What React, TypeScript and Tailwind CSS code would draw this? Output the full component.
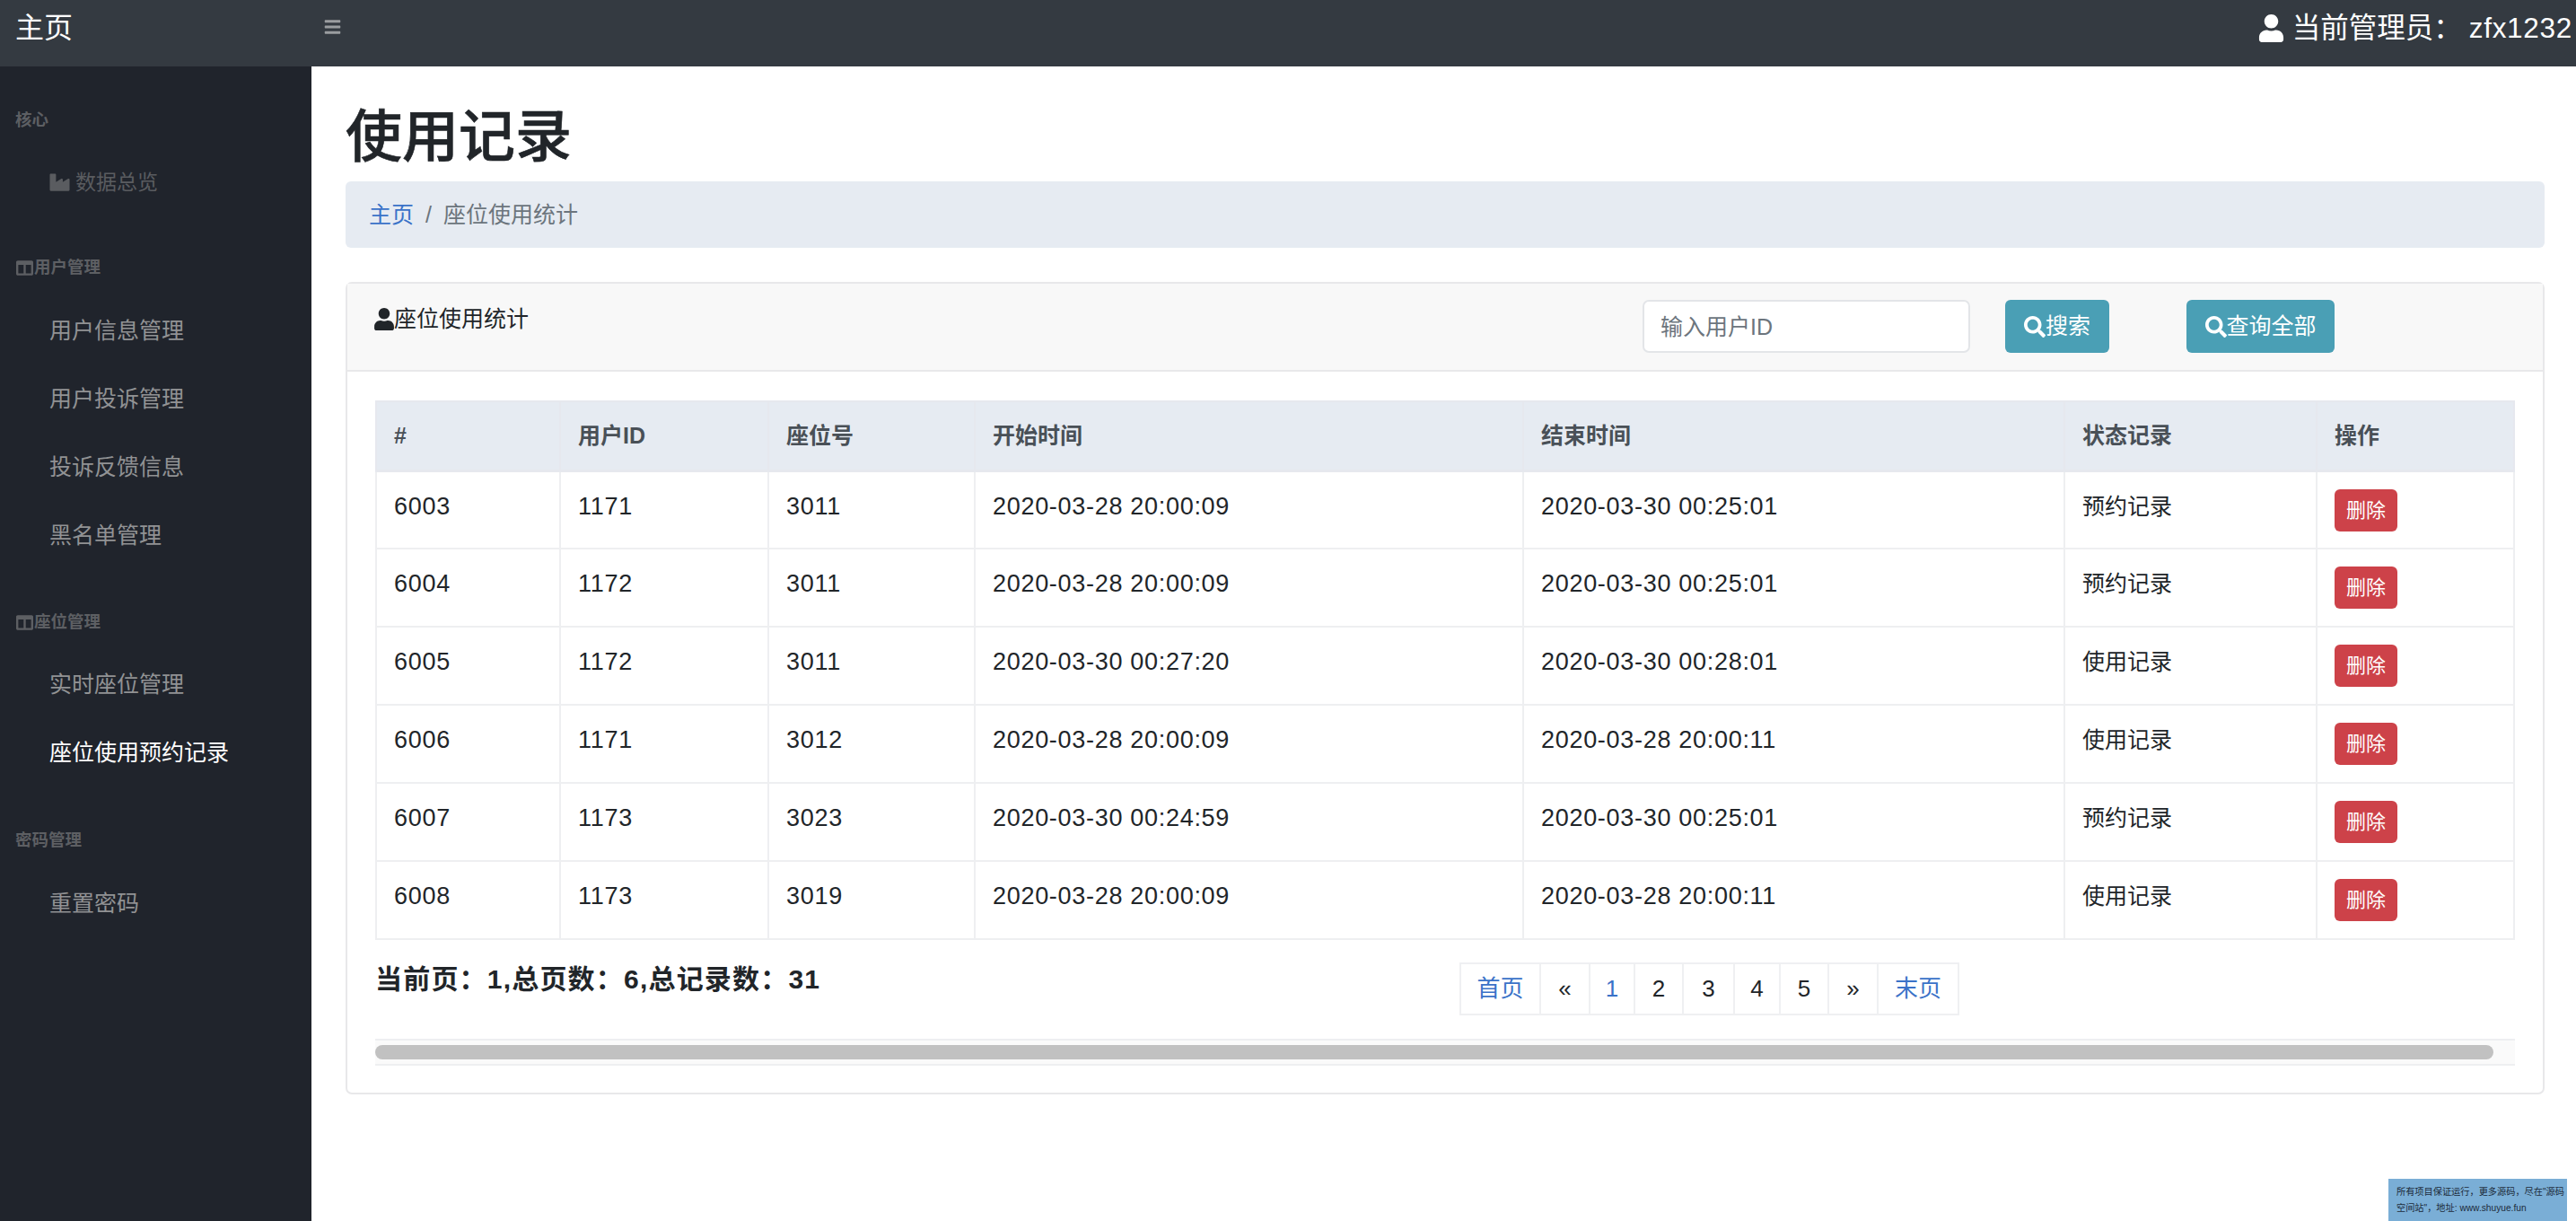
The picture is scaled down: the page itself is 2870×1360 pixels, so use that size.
import { FaBars, FaColumns, FaIndustry, FaSearch, FaUser } from "react-icons/fa";

const FONT = "font-['Liberation_Sans','Noto_Sans_CJK_SC',sans-serif]";

const records = [
  { id: "6003", user: "1171", seat: "3011", start: "2020-03-28 20:00:09", end: "2020-03-30 00:25:01", state: "预约记录" },
  { id: "6004", user: "1172", seat: "3011", start: "2020-03-28 20:00:09", end: "2020-03-30 00:25:01", state: "预约记录" },
  { id: "6005", user: "1172", seat: "3011", start: "2020-03-30 00:27:20", end: "2020-03-30 00:28:01", state: "使用记录" },
  { id: "6006", user: "1171", seat: "3012", start: "2020-03-28 20:00:09", end: "2020-03-28 20:00:11", state: "使用记录" },
  { id: "6007", user: "1173", seat: "3023", start: "2020-03-30 00:24:59", end: "2020-03-30 00:25:01", state: "预约记录" },
  { id: "6008", user: "1173", seat: "3019", start: "2020-03-28 20:00:09", end: "2020-03-28 20:00:11", state: "使用记录" },
];

const headers = ["#", "用户ID", "座位号", "开始时间", "结束时间", "状态记录", "操作"];

const pages = [
  { label: "首页", width: "w-[89px]", blue: true },
  { label: "«", width: "w-[55px]" },
  { label: "1", width: "w-[50px]", blue: true },
  { label: "2", width: "w-[54px]" },
  { label: "3", width: "w-[57px]" },
  { label: "4", width: "w-[51px]" },
  { label: "5", width: "w-[54px]" },
  { label: "»", width: "w-[55px]" },
  { label: "末页", width: "w-[88px]", blue: true },
];

function SectionHeading({ label, icon }: { label: string; icon?: boolean }) {
  return (
    <div className="flex h-6 items-center pl-[17px] text-[18.5px] font-bold text-[#5d5f63]">
      {icon && <FaColumns className="h-[19px] w-[21px]" />}
      <span>{label}</span>
    </div>
  );
}

function NavItem({ label, active }: { label: string; active?: boolean }) {
  return (
    <div className={`flex h-[76px] items-center pl-[55px] pt-[2px] text-[25px] ${active ? "text-white" : "text-[#919294]"}`}>
      {label}
    </div>
  );
}

function Sidebar() {
  return (
    <aside className="flex w-[347px] shrink-0 flex-col bg-[#20242c] pt-[48px]">
      <SectionHeading label="核心" />
      <div className="mt-[19px] flex h-[76px] items-center gap-[5px] pl-[54px] text-[23px] text-[#5a5c60]">
        <FaIndustry className="h-[22px] w-[25px]" />
        <span>数据总览</span>
      </div>
      <div className="mt-[45px]">
        <SectionHeading label="用户管理" icon />
      </div>
      <div className="mt-[20px]">
        <NavItem label="用户信息管理" />
        <NavItem label="用户投诉管理" />
        <NavItem label="投诉反馈信息" />
        <NavItem label="黑名单管理" />
      </div>
      <div className="mt-[47px]">
        <SectionHeading label="座位管理" icon />
      </div>
      <div className="mt-[19px]">
        <NavItem label="实时座位管理" />
        <NavItem label="座位使用预约记录" active />
      </div>
      <div className="mt-[48px]">
        <SectionHeading label="密码管理" />
      </div>
      <div className="mt-[20px]">
        <NavItem label="重置密码" />
      </div>
    </aside>
  );
}

function TopBar() {
  return (
    <header className="flex h-[74px] items-start bg-[#343a41] text-white">
      <div className="w-[347px] pl-[17px] pt-[13px] text-[32px] leading-[36px]">主页</div>
      <FaBars className="ml-[14px] mt-[20px] h-[20px] w-[19px] text-[#9a9da0]" />
      <div className="ml-auto flex items-center pr-[4px] pt-[13px] text-[31.5px] leading-[36px]">
        <FaUser className="mr-[9px] h-[31px] w-[29px]" />
        <span>当前管理员：</span>
        <span className="ml-[8px] tracking-[0.7px]">zfx1232</span>
      </div>
    </header>
  );
}

function RecordTable() {
  return (
    <table className="w-[2382px] table-fixed border-collapse">
      <colgroup>
        <col className="w-[205px]" />
        <col className="w-[232px]" />
        <col className="w-[230px]" />
        <col className="w-[611px]" />
        <col className="w-[603px]" />
        <col className="w-[281px]" />
        <col className="w-[220px]" />
      </colgroup>
      <thead>
        <tr className="h-[77px] bg-[#e6ebf2] text-left">
          {headers.map((h) => (
            <th key={h} className="border-2 border-b-[3px] border-[#e6e8ee] pl-[19px] text-[25px] font-bold text-[#495057]">
              {h}
            </th>
          ))}
        </tr>
      </thead>
      <tbody>
        {records.map((r) => (
          <tr key={r.id} className="h-[87px]">
            {[r.id, r.user, r.seat, r.start, r.end].map((v, i) => (
              <td key={i} className="border-2 border-[#eeeff1] pl-[19px] pt-[19px] align-top text-[27px] leading-[38px] tracking-[0.7px] text-[#212529]">
                {v}
              </td>
            ))}
            <td className="border-2 border-[#eeeff1] pl-[19px] pt-[19px] align-top text-[25px] leading-[38px] text-[#212529]">
              {r.state}
            </td>
            <td className="border-2 border-[#eeeff1] pl-[19px] pt-[19px] align-top">
              <button className="block h-[47px] w-[70px] rounded-[6px] bg-[#cd4249] text-[22px] text-white">删除</button>
            </td>
          </tr>
        ))}
      </tbody>
    </table>
  );
}

function Pager() {
  return (
    <div className="flex h-[59px] border-2 border-[#eff0f2]">
      {pages.map((p) => (
        <div
          key={p.label}
          className={`flex items-center justify-center border-r-2 border-[#eff0f2] text-[26px] last:border-r-0 ${p.width} ${p.blue ? "text-[#3a72c8]" : "text-[#212529]"}`}
        >
          {p.label}
        </div>
      ))}
    </div>
  );
}

function Card() {
  return (
    <section className="mt-[38px] rounded-[7px] border-2 border-[#e8e8ea]">
      <div className="flex h-[98px] items-start border-b-2 border-[#e8e8ea] bg-[#f8f8f8]">
        <div className="ml-[30px] mt-[22px] flex items-center text-[25px] leading-[34px] text-[#212529]">
          <FaUser className="h-[25px] w-[22px]" />
          <span>座位使用统计</span>
        </div>
        <input
          placeholder="输入用户ID"
          className="ml-[1241px] mt-[18px] h-[59px] w-[365px] rounded-[7px] border-2 border-[#e3e5e8] bg-white pl-[18px] pt-[2px] text-[25px] placeholder:text-[#6c757d]"
        />
        <button className="ml-[39px] mt-[18px] flex h-[59px] w-[116px] items-center justify-center rounded-[6px] bg-[#4a9fb5] text-[25px] text-white">
          <FaSearch className="h-[24px] w-[24px]" />
          搜索
        </button>
        <button className="ml-[86px] mt-[18px] flex h-[59px] w-[165px] items-center justify-center rounded-[6px] bg-[#4a9fb5] text-[25px] text-white">
          <FaSearch className="h-[24px] w-[24px]" />
          查询全部
        </button>
      </div>
      <div className="px-[31px] pb-[30px] pt-[32px]">
        <RecordTable />
        <div className="mt-[25px] flex items-start">
          <p className="mt-[1px] w-[1208px] text-[30px] font-bold leading-[36px] tracking-[1.2px] text-[#212529]">
            当前页：1,总页数：6,总记录数：31
          </p>
          <Pager />
        </div>
        <div className="mt-[26px] flex h-[30px] items-center border-y-2 border-[#eeeff1] bg-[#fafafa] pr-[24px]">
          <div className="h-[16px] w-full rounded-full bg-[#c1c1c1]" />
        </div>
      </div>
    </section>
  );
}

export default function App() {
  return (
    <div className={`relative h-[1360px] w-[2870px] overflow-hidden bg-white ${FONT}`}>
      <TopBar />
      <div className="flex h-[1286px]">
        <Sidebar />
        <main className="flex-1 pl-[38px] pr-[38px]">
          <h1 className="mt-[42px] text-[63px] font-medium leading-[72px] text-[#212529] [-webkit-text-stroke:0.6px_#212529]">使用记录</h1>
          <nav className="mt-[14px] flex h-[74px] items-center rounded-[6px] bg-[#e6ebf2] pl-[26px] pt-[2px] text-[25px]">
            <span className="text-[#3a72c8]">主页</span>
            <span className="mx-[13px] text-[#6c757d]">/</span>
            <span className="text-[#6c757d]">座位使用统计</span>
          </nav>
          <Card />
        </main>
      </div>
      <div className="absolute bottom-0 right-[10px] h-[47px] w-[199px] whitespace-nowrap bg-[#7aaed6] pl-[9px] pt-[6px] text-[10.2px] leading-[18px] text-[#1c2b3a]">
        所有项目保证运行，更多源码，尽在"源码
        <br />
        空间站"，地址: www.shuyue.fun
      </div>
    </div>
  );
}
